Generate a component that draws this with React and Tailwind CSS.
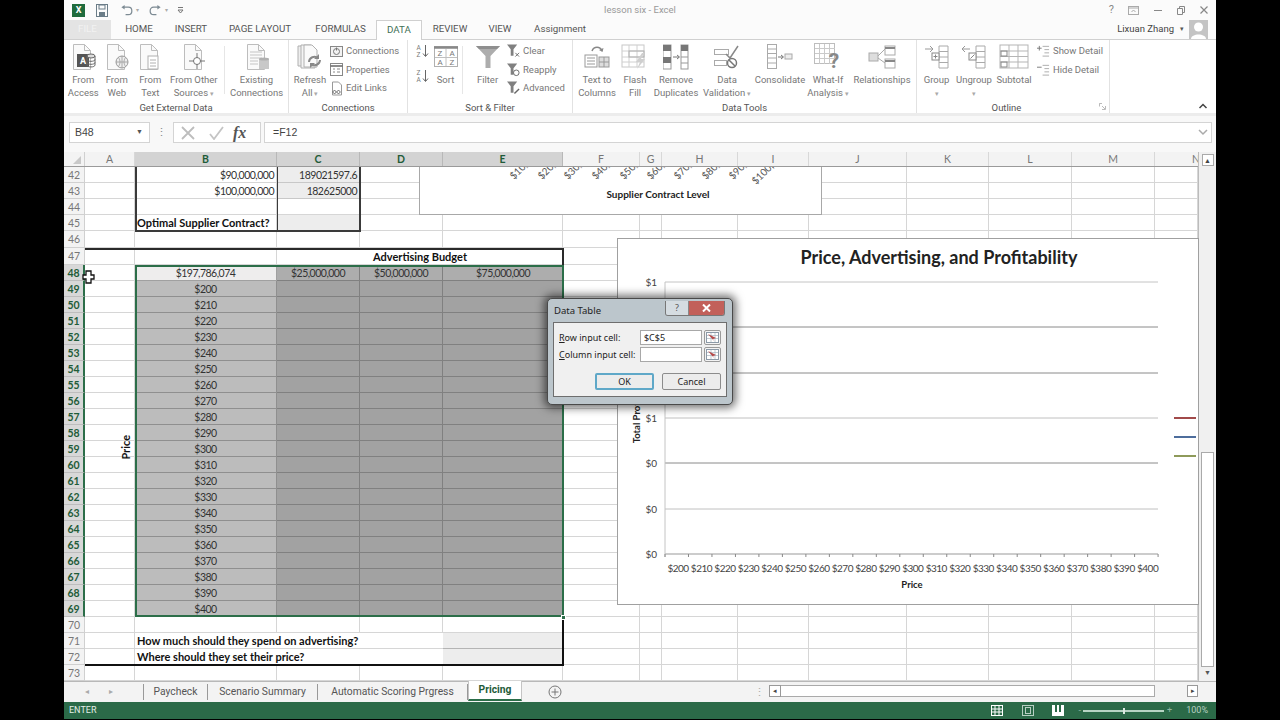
import { Fragment } from 'react'

const gridCols = 'grid grid-cols-[21px_50px_142px_83px_83px_120px_77px_22px_76px_71px_98px_82px_83px_83px_43px]'
const colNames = ['A', 'B', 'C', 'D', 'E', 'F', 'G', 'H', 'I', 'J', 'K', 'L', 'M', 'N']
const rows = Array.from({ length: 32 }, (_, i) => 42 + i)

function Doc({ children }) {
  return (
    <svg width="26" height="28" viewBox="0 0 26 28" fill="none">
      <path d="M3.5 1.5h11l6 6v19h-17z" fill="#fafafa" stroke="#bdbdbd" />
      <path d="M14.5 1.5v6h6" stroke="#bdbdbd" />
      {children}
    </svg>
  )
}

const iconAccess = (
  <Doc>
    <rect x="7" y="11" width="12" height="13" fill="#555" />
    <text x="13" y="21" fontSize="9" fontWeight="700" fill="#fff" textAnchor="middle" fontFamily="Roboto">A</text>
    <ellipse cx="21" cy="13" rx="4" ry="2" fill="#ddd" stroke="#666" />
    <path d="M17 13v9c0 2.6 8 2.6 8 0v-9M17 16.5c0 2.4 8 2.4 8 0M17 19.5c0 2.4 8 2.4 8 0" stroke="#666" />
  </Doc>
)
const iconWeb = (
  <Doc>
    <circle cx="18" cy="19" r="6" fill="#eee" stroke="#999" />
    <path d="M12 19h12M18 13v12M14.5 14.5c2 3 2 6 0 9M21.5 14.5c-2 3-2 6 0 9" stroke="#999" strokeWidth=".8" />
  </Doc>
)
const iconText = (
  <Doc>
    <rect x="11" y="13" width="10" height="13" fill="#fff" stroke="#b0b0b0" />
    <path d="M13 17h6M13 20h6M13 23h6" stroke="#b0b0b0" />
  </Doc>
)
const iconOther = (
  <Doc>
    <circle cx="16" cy="18" r="3.5" fill="#fff" stroke="#777" />
    <path d="M16 10v5M16 21v5M8 18h5M19 18h5" stroke="#777" />
  </Doc>
)
const iconExisting = (
  <Doc>
    <path d="M6 9h12M6 12h12M6 15h12M6 18h8M6 21h8" stroke="#c4c4c4" />
    <path d="M15 16h10v10H15z" fill="#c8c8c8" />
    <ellipse cx="20" cy="16" rx="5" ry="1.5" fill="#b0b0b0" />
  </Doc>
)
const iconRefresh = (
  <svg width="30" height="28" viewBox="0 0 30 28" fill="none">
    <path d="M3 3h10v20H3z" fill="#eee" stroke="#b0b0b0" />
    <path d="M6 2h10l4 4v19H6z" fill="#f4f4f4" stroke="#b0b0b0" />
    <path d="M9 2h8l5 5v17H9z" fill="#fafafa" stroke="#b0b0b0" />
    <path d="M14 19a5.5 5.5 0 0 1 9-4M25 17a5.5 5.5 0 0 1-9 4" stroke="#888" strokeWidth="2" />
    <path d="M24 11v5h-5zM15 25v-5h5z" fill="#888" />
  </svg>
)
const iconConnections = (
  <svg width="13" height="13" viewBox="0 0 13 13" fill="none">
    <rect x=".5" y="1.5" width="12" height="10" fill="#f3f3f3" stroke="#888" />
    <circle cx="6.5" cy="6.5" r="3" stroke="#777" />
    <path d="M6.5 2.5v3" stroke="#777" />
  </svg>
)
const iconProperties = (
  <svg width="13" height="13" viewBox="0 0 13 13" fill="none">
    <rect x=".5" y=".5" width="12" height="12" fill="#fff" stroke="#888" />
    <path d="M.5 3h12" stroke="#666" strokeWidth="1.5" />
    <path d="M3 6h2M7 6h3M3 9h2M7 9h3" stroke="#888" />
  </svg>
)
const iconEdit = (
  <svg width="13" height="15" viewBox="0 0 13 15" fill="none">
    <path d="M2.5 1h6l3 3v10h-9z" fill="#fff" stroke="#999" />
    <path d="M3 11c0-2 3-2 3 0s-3 2-3 0zM7 11c0-2 3-2 3 0s-3 2-3 0z" stroke="#666" />
  </svg>
)
const iconAz = (top, bottom) => (
  <svg width="14" height="14" viewBox="0 0 14 14" fill="none">
    <text x="3.5" y="6" fontSize="6.5" fill="#777" textAnchor="middle" fontFamily="Roboto">{top}</text>
    <text x="3.5" y="13" fontSize="6.5" fill="#777" textAnchor="middle" fontFamily="Roboto">{bottom}</text>
    <path d="M10.5 1v11M8 9.5l2.5 3 2.5-3" stroke="#666" />
  </svg>
)
const iconSort = (
  <svg width="24" height="22" viewBox="0 0 24 22" fill="none">
    <rect x=".5" y=".5" width="23" height="20" fill="#fff" stroke="#b0b0b0" />
    <path d="M0 1.5h24" stroke="#888" strokeWidth="2.5" />
    <path d="M12 3v17M1 11.500h22" stroke="#c0c0c0" />
    <text x="6" y="10" fontSize="8" fill="#777" textAnchor="middle" fontFamily="Roboto">Z</text>
    <text x="18" y="10" fontSize="8" fill="#777" textAnchor="middle" fontFamily="Roboto">A</text>
    <text x="6" y="19" fontSize="8" fill="#777" textAnchor="middle" fontFamily="Roboto">A</text>
    <text x="18" y="19" fontSize="8" fill="#777" textAnchor="middle" fontFamily="Roboto">Z</text>
  </svg>
)
const iconFunnel = (
  <svg width="24" height="24" viewBox="0 0 24 24">
    <path d="M0 1h24L14.5 11v12h-5V11z" fill="#adadad" />
    <path d="M0 1h24l-3 3H3z" fill="#8f8f8f" />
  </svg>
)
const smallFunnel = (mark) => (
  <svg width="14" height="14" viewBox="0 0 14 14" fill="none">
    <path d="M0 0h11L7 5v7H4V5z" fill="#808080" />
    {mark}
  </svg>
)
const iconTextCols = (
  <svg width="26" height="26" viewBox="0 0 26 26" fill="none">
    <path d="M8 7c2-5 8-5 10 0" stroke="#888" strokeWidth="1.5" />
    <path d="M15 6l3.5 2 1-4z" fill="#888" />
    <rect x="1" y="11" width="12" height="12" fill="#fff" stroke="#999" />
    <path d="M3 14h8M3 17h8M3 20h8" stroke="#999" />
    <rect x="15" y="13" width="10" height="10" fill="#ddd" stroke="#999" />
    <path d="M20 13v10M15 18h10" stroke="#999" />
  </svg>
)
const iconFlash = (
  <svg width="28" height="26" viewBox="0 0 28 26" fill="none">
    <rect x="1" y="1" width="22" height="22" fill="#fff" stroke="#c8c8c8" />
    <path d="M1 7h22M1 13h22M1 18h22M8 1v22M16 1v22" stroke="#d0d0d0" />
    <rect x="8" y="7" width="15" height="6" stroke="#b0b0b0" />
    <path d="M21 9l-6 9h4l-3 7 8-10h-4l3-6z" fill="#cfcfcf" />
  </svg>
)
const iconRemove = (
  <svg width="26" height="26" viewBox="0 0 26 26" fill="none">
    <rect x="0" y="1" width="8" height="24" fill="#fff" stroke="#999" />
    <rect x="0" y="1" width="8" height="6" fill="#777" />
    <rect x="0" y="13" width="8" height="6" fill="#777" />
    <rect x="18" y="1" width="7" height="24" fill="#fff" stroke="#999" />
    <rect x="18" y="1" width="7" height="6" fill="#777" />
    <path d="M18 13h7M18 19h7" stroke="#999" />
    <path d="M10 13h6M14 11l2.5 2-2.5 2" stroke="#777" />
  </svg>
)
const iconValidation = (
  <svg width="26" height="24" viewBox="0 0 26 24" fill="none">
    <rect x=".5" y="4.5" width="14" height="5" fill="#fff" stroke="#aaa" />
    <rect x=".5" y="15.5" width="12" height="5" fill="#fff" stroke="#aaa" />
    <path d="M12 9l4 4L24 1" stroke="#888" strokeWidth="1.5" />
    <circle cx="18" cy="18" r="4.5" stroke="#777" strokeWidth="1.5" />
    <path d="M15 15l6 6" stroke="#777" strokeWidth="1.5" />
  </svg>
)
const iconConsolidate = (
  <svg width="26" height="26" viewBox="0 0 26 26" fill="none">
    <rect x=".5" y=".5" width="9" height="24" fill="#fff" stroke="#aaa" />
    <path d="M1 5h8M1 9.500h8M1 14h8M1 19h8" stroke="#aaa" />
    <path d="M11 13h5M14 11l2.5 2-2.500 2" stroke="#777" />
    <rect x="18" y="10" width="7" height="5" fill="#eee" stroke="#aaa" />
  </svg>
)
const iconWhatIf = (
  <svg width="28" height="28" viewBox="0 0 28 28" fill="none">
    <rect x=".5" y=".5" width="20" height="20" fill="#fff" stroke="#bdbdbd" />
    <path d="M5.5 1v20M10.5 1v20M15.5 1v20M1 5.5h20M1 10.5h20M1 15.5h20" stroke="#cacaca" />
    <text x="20" y="25" fontSize="21" fontWeight="700" fill="#888" textAnchor="middle" fontFamily="Roboto">?</text>
  </svg>
)
const iconRelations = (
  <svg width="28" height="24" viewBox="0 0 28 24" fill="none">
    <rect x="1" y="8" width="9" height="8" fill="#ddd" stroke="#aaa" />
    <rect x="17" y="1" width="10" height="9" fill="#fff" stroke="#aaa" />
    <rect x="17" y="14" width="10" height="9" fill="#fff" stroke="#aaa" />
    <path d="M17 3h10M17 16h10" stroke="#888" strokeWidth="2" />
    <path d="M10 11l7-7M10 13l7 5" stroke="#aaa" />
  </svg>
)
const iconGroup = (arrow) => (
  <svg width="26" height="26" viewBox="0 0 26 26" fill="none">
    <path d="M15 2h9v22h-9M15 7.5h9M15 13h9M15 18.5h9M15 2v22" stroke="#aaa" />
    <rect x="8" y="9" width="7" height="7" fill="#fff" stroke="#888" />
    {arrow === 'right' ? <path d="M1 5h8M6 2l3 3-3 3" stroke="#999" /> : <path d="M1 5h8M4 2L1 5l3 3" stroke="#999" />}
    {arrow === 'right' ? <path d="M9.5 12.500h4M11.5 10.500v4" stroke="#888" /> : <path d="M9.5 14.500l4-4" stroke="#888" />}
  </svg>
)
const iconSubtotal = (
  <svg width="30" height="26" viewBox="0 0 30 26" fill="none">
    <rect x="1" y="1" width="28" height="23" fill="#fff" stroke="#b5b5b5" />
    <path d="M10 1v23M19 1v23M1 7h28M1 12.500h28M1 18h28" stroke="#b5b5b5" />
    <rect x="2" y="7" width="6" height="5" stroke="#888" />
    <rect x="2" y="18" width="6" height="5" stroke="#888" />
  </svg>
)
const iconDetail = (plus) => (
  <svg width="14" height="14" viewBox="0 0 14 14" fill="none">
    <path d="M6 2h7M8 5.500h5M8 9h5M6 12.500h7" stroke="#aaa" />
    <path d="M0 4h5" stroke="#777" />
    {plus && <path d="M2.5 1.500v5" stroke="#777" />}
  </svg>
)

function Big({ className, icon, l1, l2, caret }) {
  return (
    <div className={`flex flex-col items-center shrink-0 ${className}`}>
      <div className="h-[33px] flex items-center justify-center">{icon}</div>
      <div className="h-[13px] leading-[13px] whitespace-nowrap">{l1}</div>
      <div className="h-[13px] leading-[13px] whitespace-nowrap">
        {l2}
        {caret && <span className="text-[7px] text-[#aaa]"> ▾</span>}
      </div>
    </div>
  )
}

function Small({ icon, text }) {
  return (
    <div className="h-[18.5px] flex items-center gap-[3px] whitespace-nowrap">
      <div className="w-[13px] flex justify-center shrink-0">{icon}</div>
      <span>{text}</span>
    </div>
  )
}

function Group({ className, labelClass = '', label, children }) {
  return (
    <div className={`relative h-full border-r border-[#e2e2e2] shrink-0 flex ${className}`}>
      {children}
      <div className={`absolute left-0 right-0 -bottom-[2px] h-[14px] leading-[14px] text-center text-[#555] ${labelClass}`}>{label}</div>
    </div>
  )
}

function Ribbon() {
  return (
    <div className="h-[73px] flex bg-white text-[9.5px] text-[#777] font-['Roboto',sans-serif] shrink-0">
      <Group className="w-[225px]" label="Get External Data">
        <div className="w-[3px]" />
        <Big className="w-[34px]" icon={iconAccess} l1="From" l2="Access" />
        <Big className="w-[33px]" icon={iconWeb} l1="From" l2="Web" />
        <Big className="w-[34px]" icon={iconText} l1="From" l2="Text" />
        <Big className="w-[53px]" icon={iconOther} l1="From Other" l2="Sources" caret />
        <div className="w-px h-[48px] mt-[6px] ml-[4px] bg-[#e6e6e6]" />
        <Big className="w-[63px]" icon={iconExisting} l1="Existing" l2="Connections" />
      </Group>
      <Group className="w-[119px]" label="Connections">
        <Big className="w-[40px] ml-px" icon={iconRefresh} l1="Refresh" l2="All" caret />
        <div className="pt-[2px]">
          <Small icon={iconConnections} text="Connections" />
          <Small icon={iconProperties} text="Properties" />
          <Small icon={iconEdit} text="Edit Links" />
        </div>
      </Group>
      <Group className="w-[165px]" label="Sort & Filter">
        <div className="w-[21px] pl-[7px] pt-[4px] flex flex-col gap-[11px]">
          {iconAz('A', 'Z')}
          {iconAz('Z', 'A')}
        </div>
        <div className="w-[33px] flex flex-col items-center">
          <div className="h-[33px] flex items-center justify-center">{iconSort}</div>
          <div className="leading-[13px]">Sort</div>
        </div>
        <div className="w-px h-[48px] mt-[6px] bg-[#e6e6e6]" />
        <div className="w-[49px] flex flex-col items-center">
          <div className="h-[33px] flex items-center justify-center">{iconFunnel}</div>
          <div className="leading-[13px]">Filter</div>
        </div>
        <div className="pt-[2px] -ml-[5px]">
          <Small icon={smallFunnel(<path d="M9 9l4 4M13 9l-4 4" stroke="#666" />)} text="Clear" />
          <Small icon={smallFunnel(<circle cx="10" cy="10" r="3" stroke="#666" />)} text="Reapply" />
          <Small icon={smallFunnel(<path d="M8 13l5-5" stroke="#666" strokeWidth="1.5" />)} text="Advanced" />
        </div>
      </Group>
      <Group className="w-[344px]" label="Data Tools">
        <div className="w-[4px]" />
        <Big className="w-[40px]" icon={iconTextCols} l1="Text to" l2="Columns" />
        <Big className="w-[36px]" icon={iconFlash} l1="Flash" l2="Fill" />
        <Big className="w-[46px]" icon={iconRemove} l1="Remove" l2="Duplicates" />
        <Big className="w-[56px]" icon={iconValidation} l1="Data" l2="Validation" caret />
        <Big className="w-[50px]" icon={iconConsolidate} l1="Consolidate" />
        <Big className="w-[46px]" icon={iconWhatIf} l1="What-If" l2="Analysis" caret />
        <Big className="w-[62px]" icon={iconRelations} l1="Relationships" />
      </Group>
      <Group className="w-[193px]" labelClass="pr-[13px]" label="Outline">
        <div className="w-[2px]" />
        <Big className="w-[35px]" icon={iconGroup('right')} l1="Group" l2={<span className="text-[7px] text-[#aaa]">▾</span>} />
        <Big className="w-[38px] ml-px" icon={iconGroup('left')} l1="Ungroup" l2={<span className="text-[7px] text-[#aaa]">▾</span>} />
        <Big className="w-[42px]" icon={iconSubtotal} l1="Subtotal" />
        <div className="pt-[2px] ml-[2px]">
          <Small icon={iconDetail(true)} text="Show Detail" />
          <Small icon={iconDetail(false)} text="Hide Detail" />
        </div>
        <svg className="absolute right-[3px] bottom-[3px]" width="7" height="7" viewBox="0 0 7 7" fill="none">
          <path d="M.5 1V.5H3M.5.5v3M6.5 3v3.500H3M3 3l3 3" stroke="#bbb" />
        </svg>
      </Group>
      <div className="flex-1 flex items-end justify-end pb-[3px] pr-[8px]">
        <svg width="10" height="8" viewBox="0 0 10 8" fill="none">
          <path d="M1.5 6L5 2.500 8.5 6" stroke="#444" strokeWidth="1.5" />
        </svg>
      </div>
    </div>
  )
}

function TitleBar() {
  return (
    <div className="h-[20px] relative flex items-center text-[#666] shrink-0">
      <div className="flex items-center">
        <div className="ml-[8px] w-[13px] h-[13px] bg-[#1f6b3d] flex items-center justify-center text-white text-[9px] font-bold font-['Roboto',sans-serif] leading-none">X</div>
        <svg className="ml-[11px]" width="12" height="13" viewBox="0 0 12 13" fill="none">
          <rect x=".5" y=".5" width="11" height="12" stroke="#6b7d88" />
          <rect x="3" y="1" width="6" height="4" stroke="#6b7d88" />
          <rect x="3" y="8" width="6" height="4.5" fill="#6b7d88" />
        </svg>
        <svg className="ml-[12px]" width="13" height="12" viewBox="0 0 14 12" fill="none">
          <path d="M4 3h5c5 0 5 8 0 8H6" stroke="#7c8a93" strokeWidth="1.3" />
          <path d="M5 .5L1.5 3 5 5.500z" fill="#7c8a93" />
        </svg>
        <span className="ml-[3px] text-[6px] text-[#aaa]">▾</span>
        <svg className="ml-[10px]" width="13" height="12" viewBox="0 0 14 12" fill="none">
          <path d="M10 3H5c-5 0-5 8 0 8h3" stroke="#7c8a93" strokeWidth="1.3" />
          <path d="M9 .5L12.5 3 9 5.500z" fill="#7c8a93" />
        </svg>
        <span className="ml-[3px] text-[6px] text-[#aaa]">▾</span>
        <svg className="ml-[9px]" width="7" height="9" viewBox="0 0 7 9" fill="none">
          <path d="M1 1.500h5M1 4l2.500 3L6 4z" stroke="#777" />
        </svg>
      </div>
      <div className="absolute left-0 right-0 top-[3px] text-center text-[9.5px] text-[#999] font-['Roboto',sans-serif]">lesson six - Excel</div>
      <div className="ml-auto flex items-center text-[#888] mr-[8px]">
        <span className="text-[11px] font-['Roboto',sans-serif] mr-[14px]">?</span>
        <svg className="mr-[15px]" width="11" height="9" viewBox="0 0 11 9" fill="none">
          <rect x=".5" y=".5" width="10" height="8" stroke="#aaa" />
          <path d="M.5 2h10M3.5 6l2-2 2 2" stroke="#aaa" />
        </svg>
        <div className="w-[8px] h-px bg-[#888] mr-[15px]" />
        <svg className="mr-[15px]" width="8" height="9" viewBox="0 0 8 9" fill="none">
          <path d="M.5 2.500h5v6h-5zM2.500 2.500V.5h5v6H5.500" stroke="#888" />
        </svg>
        <svg width="8" height="8" viewBox="0 0 8 8" fill="none">
          <path d="M.5.5l7 7M7.5.5l-7 7" stroke="#888" strokeWidth="1.2" />
        </svg>
      </div>
    </div>
  )
}

function TabRow() {
  const tabs = [
    ['HOME', 'w-[56px]'],
    ['INSERT', 'w-[48px]'],
    ['PAGE LAYOUT', 'w-[90px]'],
    ['FORMULAS', 'w-[71px]'],
  ]
  const after = [
    ['REVIEW', 'w-[56px]'],
    ['VIEW', 'w-[44px]'],
    ['Assignment', 'w-[76px]'],
  ]
  return (
    <div className="h-[20px] flex items-stretch border-b border-[#d0d0d0] text-[9.75px] text-[#555] font-['Roboto',sans-serif] shrink-0">
      <div className="w-[47px] bg-[#e4e4e4] flex items-center justify-center text-[#f2f2f2]">FILE</div>
      {tabs.map(([t, w]) => (
        <div key={t} className={`${w} flex items-center justify-center`}>{t}</div>
      ))}
      <div className="w-[46px] h-[20px] flex items-center justify-center bg-white border border-b-0 border-[#d0d0d0] text-[#3f6f55]">DATA</div>
      {after.map(([t, w]) => (
        <div key={t} className={`${w} flex items-center justify-center`}>{t}</div>
      ))}
      <div className="ml-auto flex items-center mr-[8px]">
        <span className="text-[#444] text-[9.5px]">Lixuan Zhang</span>
        <span className="ml-[6px] text-[7px] text-[#555]">▾</span>
        <svg className="ml-[5px]" width="19" height="19" viewBox="0 0 19 19">
          <rect width="19" height="19" fill="#c4c4c4" />
          <circle cx="9.5" cy="7" r="4.5" fill="#fff" />
          <path d="M2 19c0-6 15-6 15 0z" fill="#fff" />
        </svg>
      </div>
    </div>
  )
}

function FormulaBar() {
  return (
    <div className="h-[39px] flex flex-col bg-[#f8f8f8] shrink-0">
      <div className="h-[3px] bg-[#ececec]" />
      <div className="mt-[6px] h-[21px] flex items-center pl-[5px] pr-[4px] font-['Liberation_Sans',sans-serif] text-[10.5px] text-[#444]">
        <div className="w-[81px] h-full bg-white border border-[#d4d4d4] flex items-center justify-between pl-[5px] pr-[6px]">
          <span>B48</span>
          <span className="text-[7px] text-[#555]">▼</span>
        </div>
        <div className="w-[23px] text-center text-[#888] leading-none">⋮</div>
        <div className="w-[88px] h-full bg-white border border-[#d4d4d4] flex items-center pl-[7px]">
          <svg width="14" height="14" viewBox="0 0 14 14" fill="none">
            <path d="M1 1l12 12M13 1L1 13" stroke="#bdbdbd" strokeWidth="1.8" />
          </svg>
          <svg className="ml-[14px]" width="15" height="14" viewBox="0 0 15 14" fill="none">
            <path d="M1 8l4 5L14 1" stroke="#c4c4c4" strokeWidth="1.8" />
          </svg>
          <span className="ml-[9px] font-['Liberation_Serif',serif] italic font-bold text-[16px] text-[#555] leading-none">fx</span>
        </div>
        <div className="ml-[3px] flex-1 h-full bg-white border border-[#d4d4d4] flex items-center justify-between pl-[8px] pr-[3px]">
          <span>=F12</span>
          <svg width="10" height="7" viewBox="0 0 10 7" fill="none">
            <path d="M1 1l4 4 4-4" stroke="#aaa" strokeWidth="1.5" />
          </svg>
        </div>
      </div>
    </div>
  )
}

function cellProps(row, col) {
  // col is the column letter, returns text + classes for one cell
  const num = 'text-[10.5px] tracking-[-0.5px]'
  if (row >= 42 && row <= 43) {
    if (col === 'B') return { text: row === 42 ? '$90,000,000' : '$100,000,000', cls: `${num} border-r border-b border-[#d6d6d6] text-right pr-[2px]` }
    if (col === 'C') return { text: row === 42 ? '189021597.6' : '182625000', cls: `${num} border-r border-b border-[#c8c8c8] bg-[#ededed] text-right pr-[2px]` }
  }
  if (row === 45) {
    if (col === 'B') return { text: 'Optimal Supplier Contract?', cls: 'border-r border-b border-[#d6d6d6] font-bold text-[#111] pl-[2px] whitespace-nowrap' }
    if (col === 'C') return { text: '', cls: 'border-r border-b border-[#c8c8c8] bg-[#ededed]' }
  }
  if (row === 47 && (col === 'C' || col === 'D' || col === 'E')) {
    return { text: '', cls: 'border-b border-[#d6d6d6]' }
  }
  if (row === 48) {
    if (col === 'B') return { text: '$197,786,074', cls: `${num} border-r border-b border-[#a0a0a0] bg-[#eeeded] text-center` }
    if (col === 'C') return { text: '$25,000,000', cls: `${num} border-r border-b border-[#808080] bg-[#adadad] text-center` }
    if (col === 'D') return { text: '$50,000,000', cls: `${num} border-r border-b border-[#808080] bg-[#adadad] text-center` }
    if (col === 'E') return { text: '$75,000,000', cls: `${num} border-b border-[#808080] bg-[#adadad] text-center` }
  }
  if (row >= 49 && row <= 69) {
    if (col === 'B') return { text: `$${200 + (row - 49) * 10}`, cls: `${num} border-r border-b border-[#8f8f8f] bg-[#bcbcbc] text-center` }
    if (col === 'C' || col === 'D') return { text: '', cls: 'border-r border-b border-[#808080] bg-[#a2a2a2]' }
    if (col === 'E') return { text: '', cls: 'border-b border-[#808080] bg-[#a2a2a2]' }
  }
  if (row === 71 || row === 72) {
    if (col === 'B') return { text: row === 71 ? 'How much should they spend on advertising?' : 'Where should they set their price?', cls: 'border-b border-[#d6d6d6] font-bold text-[#111] pl-[2px] whitespace-nowrap overflow-visible' }
    if (col === 'C' || col === 'D') return { text: '', cls: 'border-b border-[#d6d6d6]' }
    if (col === 'E') return { text: '', cls: 'border-r border-b border-[#b4b4b4] bg-[#ededed]' }
  }
  return { text: '', cls: 'border-r border-b border-[#d6d6d6]' }
}

function Sheet() {
  return (
    <div className="h-[529px] flex font-['Lato',sans-serif] text-[11px] text-[#333] shrink-0">
      <div className="w-[1134px] shrink-0 bg-white">
        <div className={`${gridCols} h-[15px] leading-[14px] text-center border-b border-[#9a9a9a] bg-[#f3f3f3] text-[#777] text-[10.5px]`}>
          <div className="border-r border-[#d0d0d0] flex items-end justify-end pr-[3px] pb-[2px]">
            <svg width="8" height="8" viewBox="0 0 8 8">
              <path d="M8 0v8H0z" fill="#c8c8c8" />
            </svg>
          </div>
          {colNames.map((c) => {
            if (c === 'B' || c === 'C' || c === 'D' || c === 'E') {
              return <div key={c} className="bg-[#d3d3d3] border-r border-[#b8b8b8] text-[#1f5c39] font-bold">{c}</div>
            }
            if (c === 'N') {
              return <div key={c} className="text-left pl-[37px] overflow-hidden">{c}</div>
            }
            return <div key={c} className="border-r border-[#d8d8d8]">{c}</div>
          })}
        </div>
        {rows.map((row) => (
          <div key={row} className={`${gridCols} ${row === 46 || row === 47 ? 'h-[17px] grid-rows-[17px] leading-[17px]' : 'h-[16px] grid-rows-[16px] leading-[16px]'}`}>
            <div
              className={
                row >= 48 && row <= 69
                  ? 'bg-[#d8d8d8] border-r-2 border-r-[#2c6e49] border-b border-[#bdbdbd] text-center text-[#1f5c39] font-bold text-[10.5px]'
                  : 'bg-[#f3f3f3] border-r border-b border-[#d0d0d0] text-center text-[#777] text-[10.5px]'
              }
            >
              {row}
            </div>
            {colNames.map((col) => {
              const cell = cellProps(row, col)
              return (
                <div key={col} className={cell.cls}>
                  {cell.text}
                </div>
              )
            })}
          </div>
        ))}
      </div>
      <div className="w-[18px] bg-[#f0f0f0] border-l border-[#bcbcbc] flex flex-col items-center">
        <div className="mt-[2px] w-[12px] h-[12px] border border-[#aaa] bg-white flex items-center justify-center text-[7px] text-[#444] leading-none">▲</div>
        <div className="mt-[286px] w-[13px] h-[215px] border border-[#aaa] bg-white" />
        <div className="mt-[2px] text-[7px] text-[#555] leading-none">▼</div>
      </div>
    </div>
  )
}

function TopChart() {
  const spots = [[94, 13], [122, 13], [148, 13], [176, 13], [204, 13], [231, 13], [258, 13], [286, 13], [313, 13], [336, 18]]
  const labels = ['$10', '$20', '$30', '$40', '$50', '$60', '$70', '$80', '$90', '$100']
  return (
    <div className="absolute left-[419px] top-[167px] w-[403px] h-[48px] bg-white border-x border-b border-[#a8a8a8] overflow-hidden">
      <svg className="w-full h-full" viewBox="0 0 401 47" fontFamily="Lato" fill="#555" fontSize="10">
        {spots.map(([x, y], i) => (
          <text key={i} x={x} y={y} transform={`rotate(-45 ${x} ${y})`}>{labels[i]},000,000</text>
        ))}
        <text x="238" y="31" textAnchor="middle" fontWeight="700" fill="#222" fontSize="10">Supplier Contract Level</text>
      </svg>
    </div>
  )
}

function PriceChart() {
  const ys = [44, 89, 135, 180, 225, 271, 316]
  const shades = ['#c4c4c4', '#8a8a8a', '#8a8a8a', '#c0c0c0', '#8a8a8a', '#c0c0c0', '#999']
  const yLabels = ['$1', '$1', '$1', '$1', '$0', '$0', '$0']
  const xLabels = Array.from({ length: 21 }, (_, i) => 200 + i * 10)
  return (
    <div className="absolute left-[617px] top-[238px] w-[582px] h-[367px] bg-white border border-[#a0a0a0]">
      <svg width="580" height="365" viewBox="1 1 580 365" fontFamily="Lato" fontSize="10" fill="#444">
        <text x="322" y="26" textAnchor="middle" fontSize="18" fontWeight="700" fill="#222">Price, Advertising, and Profitability</text>
        {ys.map((y, i) => (
          <Fragment key={y}>
            <line x1="48" x2="541" y1={y} y2={y} stroke={shades[i]} />
            <text x="40" y={y + 4} textAnchor="end">{yLabels[i]}</text>
          </Fragment>
        ))}
        <line x1="48" x2="48" y1="44" y2="319" stroke="#c4c4c4" />
        {Array.from({ length: 22 }, (_, i) => (
          <line key={i} x1={48 + i * 23.48} x2={48 + i * 23.48} y1="316" y2="319" stroke="#888" />
        ))}
        {xLabels.map((v, i) => (
          <text key={v} x={61 + i * 23.48} y="334" textAnchor="middle" letterSpacing="-.5">${v}</text>
        ))}
        <text x="295" y="350" textAnchor="middle" fontWeight="700" fill="#222" fontSize="9.5">Price</text>
        <text transform="translate(23 182) rotate(-90)" textAnchor="middle" fontWeight="700" fill="#222" fontSize="9.5">Total Profit</text>
        <line x1="557" x2="579" y1="180" y2="180" stroke="#a14a4a" strokeWidth="2" />
        <line x1="557" x2="579" y1="199" y2="199" stroke="#4d6d9c" strokeWidth="2" />
        <line x1="557" x2="579" y1="218" y2="218" stroke="#8e9a5a" strokeWidth="2" />
      </svg>
    </div>
  )
}

function Picker() {
  return (
    <div className="w-[17px] h-[15px] bg-[#f3f3f3] border border-[#9a9a9a] rounded-[2px] flex items-center justify-center">
      <svg width="13" height="11" viewBox="0 0 13 11" fill="none">
        <rect x=".5" y=".5" width="12" height="10" fill="#fff" stroke="#8c9aa8" />
        <path d="M1 3.500h11M1 6.500h11M5 1v9M9 1v9" stroke="#a8b4c0" strokeWidth=".7" />
        <path d="M2 2l8 4-3 1 1 2z" fill="#b54848" />
      </svg>
    </div>
  )
}

function DataTableDialog() {
  return (
    <div className="absolute left-[547px] top-[298px] w-[186px] h-[107px] rounded-[5px] bg-[#bcc6cc] border border-[#4a4a4a] shadow-[0_0_9px_3px_rgba(0,0,0,0.55)] font-['Noto_Sans',sans-serif] text-[9px] text-[#222]">
      <div className="h-[23px] relative">
        <span className="absolute left-[6px] top-[5px] text-[9.5px]">Data Table</span>
        <div className="absolute right-[7px] top-[2px] w-[60px] h-[15px] flex rounded-b-[3px] overflow-hidden border border-t-0 border-[#777]">
          <div className="w-[23px] bg-[#d5dce1] text-center text-[#555] leading-[13px] border-r border-[#888]">?</div>
          <div className="flex-1 bg-[#c2605a] flex items-center justify-center">
            <svg width="9" height="8" viewBox="0 0 9 8" fill="none">
              <path d="M1 .5l7 7M8 .5l-7 7" stroke="#fff" strokeWidth="2" />
            </svg>
          </div>
        </div>
      </div>
      <div className="mx-[5px] h-[75px] bg-[#f0f0f0] border border-[#6e6e6e] pt-[7px] px-[5px]">
        <div className="flex items-center h-[15px] mb-[2px]">
          <span className="w-[82px]"><span className="underline">R</span>ow input cell:</span>
          <div className="w-[63px] h-[15px] bg-white border border-[#a8a8a8] pl-[3px] leading-[13px] mr-[2px]">$C$5</div>
          <Picker />
        </div>
        <div className="flex items-center h-[15px]">
          <span className="w-[82px] whitespace-nowrap"><span className="underline">C</span>olumn input cell:</span>
          <div className="w-[63px] h-[15px] bg-white border border-[#a8a8a8] mr-[2px]" />
          <Picker />
        </div>
        <div className="flex mt-[11px] ml-[36px] gap-[8px]">
          <div className="w-[60px] h-[17px] rounded-[2px] border-2 border-[#5fa8c8] bg-[#ececec] flex items-center justify-center leading-none">OK</div>
          <div className="w-[60px] h-[17px] rounded-[2px] border border-[#8c8c8c] bg-[#ececec] flex items-center justify-center leading-none">Cancel</div>
        </div>
      </div>
    </div>
  )
}

function SheetTabs() {
  const names = [
    ['Paycheck', 'w-[64px]'],
    ['Scenario Summary', 'w-[110px]'],
    ['Automatic Scoring Prgress', 'w-[150px]'],
  ]
  return (
    <div className="h-[21px] flex items-stretch bg-[#f3f3f3] border-t border-[#b8b8b8] text-[10.3px] text-[#555] font-['Roboto',sans-serif] shrink-0">
      <div className="w-[80px] shrink-0 flex items-center text-[#aaa] text-[8px] pl-[21px] gap-[20px] border-r border-[#999] my-[2px]">
        <span>◂</span>
        <span>▸</span>
      </div>
      {names.map(([n, w]) => (
        <div key={n} className={`${w} shrink-0 flex items-center justify-center border-r border-[#999] my-[2px]`}>{n}</div>
      ))}
      <div className="w-[54px] shrink-0 -mt-px h-[20px] flex items-center justify-center bg-white border-x border-b-2 border-[#c4c4c4] border-b-[#2c6e49] font-bold text-[#1f5c39]">Pricing</div>
      <div className="w-[65px] shrink-0 flex items-center justify-center">
        <svg width="14" height="14" viewBox="0 0 14 14" fill="none">
          <circle cx="7" cy="7" r="6" stroke="#777" />
          <path d="M7 3.5v7M3.5 7h7" stroke="#777" />
        </svg>
      </div>
      <div className="ml-[167px] w-[5px] shrink-0 flex items-center text-[#aaa] text-[11px] leading-none">⋮</div>
      <div className="ml-[10px] mt-[3px] w-[429px] h-[12px] shrink-0 flex items-stretch">
        <div className="w-[12px] bg-white border border-[#999] flex items-center justify-center text-[7px] text-[#444]">◂</div>
        <div className="w-[374px] bg-white border-y border-r border-[#aaa]" />
        <div className="w-[32px]" />
        <div className="w-[11px] bg-white border border-[#999] flex items-center justify-center text-[7px] text-[#444]">▸</div>
      </div>
    </div>
  )
}

function StatusBar() {
  return (
    <div className="h-[17px] flex items-center bg-[#2b6a48] text-[9px] text-[#e3ede7] font-['Roboto',sans-serif] pl-[5px] pr-[8px] shrink-0">
      <span>ENTER</span>
      <div className="ml-auto flex items-center">
        <svg width="12" height="11" viewBox="0 0 12 11" fill="none">
          <rect x=".5" y=".5" width="11" height="10" fill="#2b6a48" stroke="#fff" />
          <path d="M4 1v9M8 1v9M1 4h10M1 7h10" stroke="#fff" />
        </svg>
        <svg className="ml-[19px]" width="12" height="11" viewBox="0 0 12 11" fill="none">
          <rect x=".5" y=".5" width="11" height="10" stroke="#b7cfc2" />
          <rect x="3.5" y="2.500" width="5" height="6" stroke="#b7cfc2" />
        </svg>
        <svg className="ml-[18px]" width="12" height="11" viewBox="0 0 12 11">
          <rect width="12" height="11" fill="#fff" />
          <rect x="3" y="0" width="2" height="7" fill="#2b6a48" />
          <rect x="7" y="0" width="2" height="7" fill="#2b6a48" />
        </svg>
        <span className="ml-[15px] text-[#8fb5a0]">-</span>
        <div className="relative ml-[2px] w-[81px] h-[2px] bg-[#b7d4c4]">
          <div className="absolute left-[40px] -top-[2px] w-[2px] h-[6px] bg-[#dbe9e1]" />
        </div>
        <span className="ml-[3px] text-[#8fb5a0]">+</span>
        <span className="ml-[14px] text-[#b7cfc2]">100%</span>
      </div>
    </div>
  )
}

export default function App() {
  return (
    <div className="relative w-[1280px] h-[720px] bg-black overflow-hidden">
      <div className="ml-16 w-[1152px] h-[719px] bg-[#fbfbfb] flex flex-col">
        <TitleBar />
        <TabRow />
        <Ribbon />
        <FormulaBar />
        <Sheet />
        <SheetTabs />
        <StatusBar />
      </div>

      {/* heavy cell borders sit on top of the grid */}
      <div className="absolute left-[135px] top-[167px] w-[226px] h-[65px] border-x-2 border-b-2 border-[#3a3a3a]" />
      <div className="absolute left-[277px] top-[167px] w-px h-[64px] bg-[#3a3a3a]" />
      <div className="absolute left-[85px] top-[248px] w-[479px] h-[17px] border-t-2 border-r-2 border-[#2a2a2a]" />
      <div className="absolute left-[85px] top-[664px] w-[479px] h-[2px] bg-[#111]" />
      <div className="absolute left-[562px] top-[617px] w-[2px] h-[48px] bg-[#111]" />
      <div className="absolute left-[277px] top-[250px] w-[286px] h-[15px] flex items-center justify-center font-['Lato',sans-serif] font-bold text-[11px] text-[#111]">Advertising Budget</div>
      <div className="absolute left-[119px] top-[437px] h-[20px] w-[14px] flex items-center justify-center">
        <span className="-rotate-90 font-['Lato',sans-serif] font-bold text-[11px] text-[#111]">Price</span>
      </div>
      <div className="absolute left-[135px] top-[265px] w-[429px] h-[352px] border-2 border-[#2c6e49]" />
      <div className="absolute left-[561px] top-[615px] w-[5px] h-[5px] bg-[#2c6e49] border border-white" />

      <TopChart />
      <PriceChart />
      <DataTableDialog />

      <svg className="absolute left-[82px] top-[270px]" width="13" height="14" viewBox="0 0 13 14">
        <path d="M4 1h5v4h3v4H9v4H4V9H1V5h3z" fill="#fff" stroke="#111" strokeWidth="1.3" />
      </svg>
    </div>
  )
}
